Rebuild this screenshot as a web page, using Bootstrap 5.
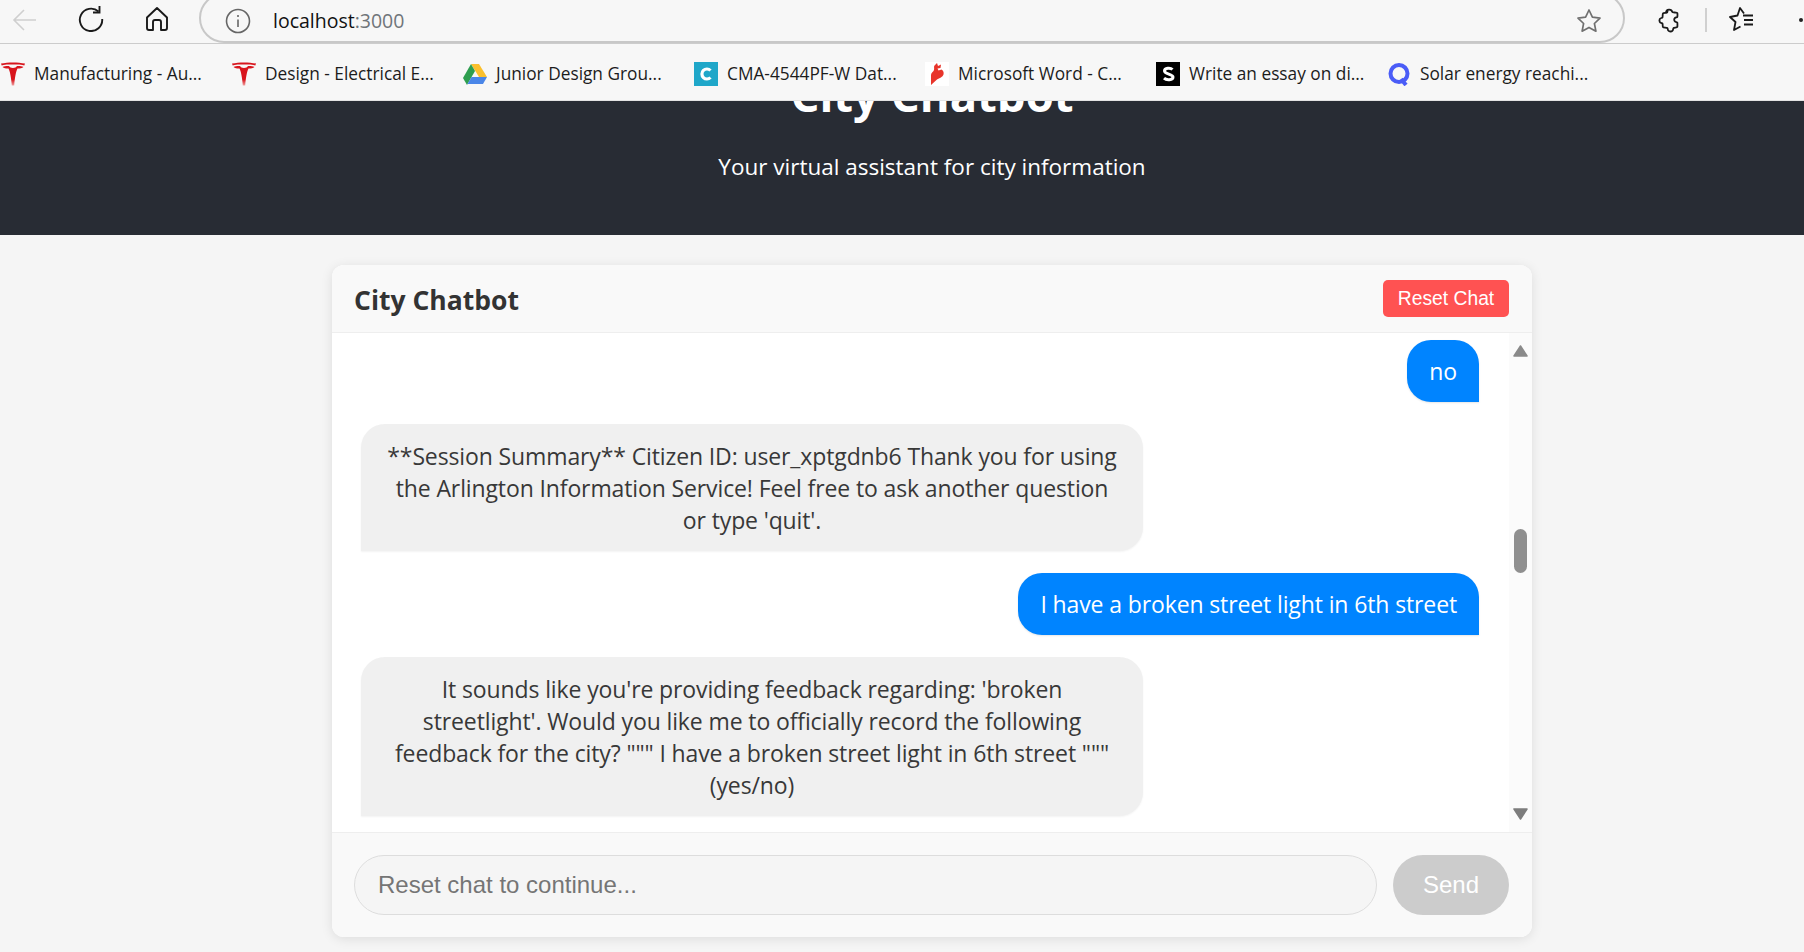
<!DOCTYPE html>
<html lang="en">
<head>
<meta charset="UTF-8">
<title>City Chatbot</title>
<link href="https://cdn.jsdelivr.net/npm/bootstrap@5.3.3/dist/css/bootstrap.min.css" rel="stylesheet">
<style>
html, body { height: 952px; overflow: hidden; }
body { background: #f5f5f5; font-family: "Open Sans", sans-serif; color: #383838; }
/* browser chrome */
.browser-top { height: 44px; background: #f7f7f7; border-bottom: 1px solid #ccc; }
.ic-back { margin: 8px 0 0 12px; }
.ic-reload { margin: 6px 0 0 41px; }
.ic-home { margin: 6px 0 0 41px; }
.addr-pill { width: 1426px; height: 50px; margin: -7px 0 0 30px; padding: 5px 21px 0 24px; border: 2px solid #c8c8c8; border-radius: 25px; background: #f7f7f7; font-size: 19.500px; color: #70757a; }
.addr-pill b { font-weight: 400; color: #111; margin-left: 22px; }
.ic-ext { margin: 7px 0 0 32px; }
.tool-sep { width: 2px; height: 24px; margin: 8px 0 0 24px; background: #d0d0d0; }
.ic-fav { margin: 7px 0 0 22px; }
.tool-dot { width: 4px; height: 4px; margin: 18px 0 0 44px; border-radius: 50%; background: #222; }
.bookmarks { height: 57px; padding-top: 4px; background: #f7f7f7; border-bottom: 1px solid #e3e3e3; font-size: 17.300px; color: #1c1c1c; }
.bm-item { width: 231px; flex: none; }
.bm-item svg { margin: 0 9px 0 1px; flex: none; }
.page-wide { width: 1864px; }
/* page */
.hero { height: 134px; background: #282c34; color: #fff; overflow: hidden; text-align: center; }
.hero h1 { font-size: 45.500px; font-weight: 700; line-height: 46px; margin: -30px 0 0; }
.hero p { font-size: 22.500px; line-height: 33px; margin: 33px 0 0; }
.chat-card { width: 1200px; height: 672px; margin: 30px auto 0; background: #fff; border-radius: 12px; box-shadow: 0 2px 12px rgba(0,0,0,.1); overflow: hidden; }
.chat-head { height: 68px; padding: 0 23px 0 22px; background: #f9f9f9; border-bottom: 1px solid #eee; }
.chat-head h2 { font-size: 26.500px; font-weight: 700; margin: 4px 0 0; color: #333; }
.reset-btn { width: 126px; height: 37px; padding: 0; background: #ff5252; color: #fff; border: 0; border-radius: 5px; font: 19.300px "Liberation Sans", sans-serif; }
.chat-body { height: 499px; }
.msg-list { padding: 7px 30px 0 29px; font-size: 23px; letter-spacing: -.12px; line-height: 32px; }
.bubble-user { background: #0084ff; color: #fff; border-radius: 24px 24px 0 24px; padding: 15px 22px; margin-bottom: 22px; box-shadow: 0 1px 2px rgba(0,0,0,.1); }
.bubble-bot { width: 782px; background: #f0f0f0; border-radius: 24px 24px 24px 0; padding: 16px 24px 15px; margin-bottom: 22px; text-align: center; box-shadow: 0 1px 2px rgba(0,0,0,.05); }
.fake-scroll { width: 23px; flex: none; padding: 12px 0; background: #fbfbfb; }
.scroll-thumb { width: 13px; height: 44px; margin-top: 172px; border-radius: 7px; background: #8f8f8f; }
.scroll-down { margin-top: auto; }
.chat-foot { height: 105px; background: #f9f9f9; border-top: 1px solid #eee; padding: 0 23px 0 22px; }
.chat-input { height: 60px; border: 1px solid #ddd; border-radius: 30px; padding: 0 23px; background: #f5f5f5; font: 24px "Liberation Sans", sans-serif; min-width: 0; }
.chat-input::placeholder { color: #757575; opacity: 1; }
.send-btn { width: 116px; height: 60px; flex: none; border: 0; border-radius: 30px; background: #ccc; color: #fff; font: 24px "Liberation Sans", sans-serif; }
</style>
</head>
<body>
<div class="browser-top d-flex align-items-start">
  <svg class="ic-back" width="25" height="24" viewBox="0 0 25 24" fill="none" stroke="#cfcfcf" stroke-width="1.600"><path d="M24 12H2M12 2L2 12l10 10"/></svg>
  <svg class="ic-reload" width="26" height="26" viewBox="0 0 26 26" fill="none" stroke="#1a1a1a" stroke-width="1.900"><path d="M20.500 5.500A11.200 11.200 0 1 0 24.200 13"/><path d="M21.500 0v6.500H15"/></svg>
  <svg class="ic-home" width="24" height="26" viewBox="0 0 24 26" fill="none" stroke="#1a1a1a" stroke-width="1.900" stroke-linejoin="round"><path d="M2 11.500L12 2l10 9.500V22a2 2 0 0 1-2 2h-4v-8a2 2 0 0 0-2-2h-4a2 2 0 0 0-2 2v8H4a2 2 0 0 1-2-2z"/></svg>
  <div class="addr-pill d-flex align-items-center">
    <svg width="26" height="26" viewBox="0 0 26 26" fill="none" stroke="#666" stroke-width="1.600"><circle cx="13" cy="13" r="11.500"/><path d="M13 11.500v7.500M13 7v2"/></svg>
    <span><b>localhost</b>:3000</span>
    <svg class="ms-auto" width="26" height="26" viewBox="0 0 26 26" fill="none" stroke="#707070" stroke-width="1.700" stroke-linejoin="round"><path d="M13 2l3.400 7.200 7.600 1-5.600 5.300 1.500 7.700L13 19.400l-6.900 3.800 1.500-7.700L2 10.200l7.600-1z"/></svg>
  </div>
  <svg class="ic-ext" width="24" height="26" viewBox="0 0 24 26" fill="none" stroke="#1a1a1a" stroke-width="1.800" stroke-linejoin="round"><path d="M9 5.500a3.200 3.200 0 0 1 6.300-.5c.1.500 4.700.500 5 1s.2 3.500 0 4c-.2.600-1.800.2-2.300 1a2.300 2.300 0 0 0 0 3.500c.5.700 2.100.4 2.300 1s.2 4 0 4.500-3.200.600-3.700 1c-.6.500-.3 2-1 2.600a3 3 0 0 1-4.400-.1c-.6-.700-.2-2-.9-2.500s-3.800-.300-4.300-.8-.2-3.300-.5-3.700-2.400-.500-2.700-1.500a3.300 3.300 0 0 1 0-3c.4-1 2.400-1 2.700-1.700s0-3.500.5-4 3-.2 3.600-.5.800-.8.900-1.300z"/></svg>
  <div class="tool-sep"></div>
  <svg class="ic-fav" width="26" height="26" viewBox="0 0 26 26" fill="none" stroke="#1a1a1a" stroke-width="1.800" stroke-linejoin="round"><path d="M15 6.500L11 1 8.500 8.500 1 10l5.500 5L5 23l6.500-3.500"/><path d="M14 8.500h10M15 13h9M15 17.500h9"/></svg>
  <div class="tool-dot"></div>
</div>
<div class="bookmarks d-flex align-items-center">
  <div class="bm-item d-flex align-items-center"><svg width="24" height="24" viewBox="0 0 24 24"><defs><linearGradient id="teslaRed" x1="0" y1="0" x2="0" y2="1"><stop offset="0" stop-color="#d8141c"/><stop offset=".7" stop-color="#d8141c"/><stop offset="1" stop-color="#f0a0a0"/></linearGradient></defs><path fill="#d8141c" d="M0 1.500C7 0 17 0 24 1.500l-.7 2C20 2.600 18 2.300 15.500 2.500l-1 .100c-2-.3-3-.3-5 0l-1-.100C6 2.300 4 2.600.7 3.500z"/><path fill="url(#teslaRed)" d="M1.500 5c2-.9 5-1.300 6.500-.9.700 1 2 2 4 2s3.300-1 4-2c1.500-.4 4.500 0 6.500.9-1.500 1.200-4 1.600-6 1.500-1.500 3-2.700 9-3.300 17h-2.400c-.6-8-1.800-14-3.300-17-2 .1-4.500-.3-6-1.500z"/></svg><span>Manufacturing - Au...</span></div>
  <div class="bm-item d-flex align-items-center"><svg width="24" height="24" viewBox="0 0 24 24"><path fill="#d8141c" d="M0 1.500C7 0 17 0 24 1.500l-.7 2C20 2.600 18 2.300 15.500 2.500l-1 .100c-2-.3-3-.3-5 0l-1-.100C6 2.300 4 2.600.7 3.500z"/><path fill="url(#teslaRed)" d="M1.500 5c2-.9 5-1.300 6.500-.9.700 1 2 2 4 2s3.300-1 4-2c1.500-.4 4.500 0 6.500.9-1.500 1.200-4 1.600-6 1.500-1.500 3-2.700 9-3.300 17h-2.400c-.6-8-1.800-14-3.300-17-2 .1-4.500-.3-6-1.500z"/></svg><span>Design - Electrical E...</span></div>
  <div class="bm-item d-flex align-items-center"><svg width="24" height="22" viewBox="0 0 24 22"><path fill="#fbc02d" d="M8 1h8l8 13h-8z"/><path fill="#2e9e4f" d="M8 1l4 7-8 14-4-7z"/><path fill="#4a86e8" d="M8.500 14H24l-4 7H4.500z"/></svg><span>Junior Design Grou...</span></div>
  <div class="bm-item d-flex align-items-center"><svg width="24" height="24" viewBox="0 0 24 24"><rect width="24" height="24" fill="#1fa7c9"/><path d="M16.500 8.500a5 5 0 1 0 0 7" stroke="#fff" stroke-width="3.200" fill="none"/></svg><span>CMA-4544PF-W Dat...</span></div>
  <div class="bm-item d-flex align-items-center"><svg width="24" height="24" viewBox="0 0 24 24"><rect width="24" height="24" fill="#fff"/><path fill="#e8352b" d="M12 1l1 3 3-1.500-.5 3.500-3 .5 1 2 3-1c2 1 2.500 3 2 5-.7 2.500-4 3.500-6.500 5L6 23V13c0-2.500 2.500-3 3-5s-.5-3 .5-4.500z"/></svg><span>Microsoft Word - C...</span></div>
  <div class="bm-item d-flex align-items-center"><svg width="24" height="24" viewBox="0 0 24 24"><rect width="24" height="24" fill="#000"/><path d="M16.500 7.500c-2-2-8-1.800-8 1.500s8.500 2.800 8.500 6-6.500 3.500-9 1.200" stroke="#fff" stroke-width="3" fill="none"/></svg><span>Write an essay on di...</span></div>
  <div class="bm-item d-flex align-items-center"><svg width="24" height="24" viewBox="0 0 24 24" fill="none" stroke="#4a5cf7" stroke-width="4"><circle cx="12" cy="11.500" r="8.500"/><path d="M14 17l5 6"/></svg><span>Solar energy reachi...</span></div>
</div>
<div class="page-wide">
  <div class="hero">
    <h1>City Chatbot</h1>
    <p>Your virtual assistant for city information</p>
  </div>
  <div class="chat-card">
    <div class="chat-head d-flex justify-content-between align-items-center">
      <h2>City Chatbot</h2>
      <button class="reset-btn">Reset Chat</button>
    </div>
    <div class="chat-body d-flex">
      <div class="msg-list flex-grow-1 overflow-hidden d-flex flex-column">
        <div class="d-flex justify-content-end"><div class="bubble-user">no</div></div>
        <div class="bubble-bot">**Session Summary** Citizen ID: user_xptgdnb6 Thank you for using the Arlington Information Service! Feel free to ask another question or type 'quit'.</div>
        <div class="d-flex justify-content-end"><div class="bubble-user">I have a broken street light in 6th street</div></div>
        <div class="bubble-bot">It sounds like you're providing feedback regarding: 'broken streetlight'. Would you like me to officially record the following feedback for the city? """ I have a broken street light in 6th street """ (yes/no)</div>
      </div>
      <div class="fake-scroll d-flex flex-column align-items-center">
        <svg width="15" height="12" viewBox="0 0 15 12"><path fill="#8a8a8a" stroke="#8a8a8a" stroke-linejoin="round" stroke-width="1.500" d="M7.500 1L14 11H1z"/></svg>
        <div class="scroll-thumb"></div>
        <svg class="scroll-down" width="15" height="12" viewBox="0 0 15 12"><path fill="#7d7d7d" stroke="#7d7d7d" stroke-linejoin="round" stroke-width="1.500" d="M1 1h13L7.500 11z"/></svg>
      </div>
    </div>
    <div class="chat-foot d-flex align-items-center gap-3">
      <input class="chat-input flex-grow-1" type="text" placeholder="Reset chat to continue..." disabled>
      <button class="send-btn" disabled>Send</button>
    </div>
  </div>
</div>
<script src="https://cdn.jsdelivr.net/npm/bootstrap@5.3.3/dist/js/bootstrap.bundle.min.js"></script>
</body>
</html>
